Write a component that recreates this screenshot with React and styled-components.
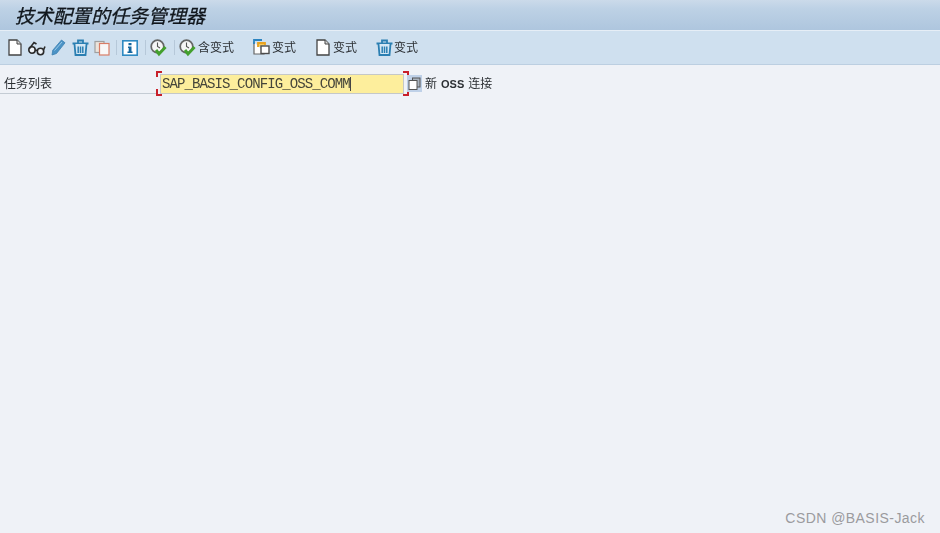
import React from 'react';
import styled, { createGlobalStyle } from 'styled-components';

const Global = createGlobalStyle`
  html, body { margin: 0; padding: 0; background: #eff2f7; }
  #root { width: 940px; height: 533px; overflow: hidden; }
`;
const CJK = `"Liberation Sans", "Noto Sans CJK SC", sans-serif`;

const Page = styled.div`
  width: 940px; height: 533px; background: #eff2f7;
  display: flex; flex-direction: column; position: relative; overflow: hidden;
  font-family: ${CJK}; color: #222;
`;
const TitleBar = styled.header`
  height: 31px; flex: none; box-sizing: border-box; padding: 0 0 0 15px;
  display: flex; align-items: center;
  background: linear-gradient(#cbdaea 0, #bdd1e5 30%, #aec6de 100%);
  border-bottom: 1px solid #e6eef6;
`;
const Title = styled.h1`
  margin: 0; font-size: 19px; line-height: 28px; font-weight: 400; font-style: italic; color: #10161c;
  -webkit-text-stroke: 0.3px #10161c; filter: blur(.3px);
  font-family: "Noto Sans CJK SC", sans-serif;
`;
const Toolbar = styled.nav`
  height: 34px; flex: none; box-sizing: border-box; padding: 0 0 0 8px;
  display: flex; align-items: center;
  background: #cfe0ef; border-bottom: 1px solid #bccfe1;
`;
const Tool = styled.button`
  all: unset; display: flex; align-items: center; gap: ${p => p.$gap || 2}px;
  height: 20px; margin-left: ${p => p.$ml || 0}px; filter: blur(.35px);
  font: 12px/20px ${CJK}; color: #2c3034;
`;
const Sep = styled.span`
  width: 1px; height: 15px; background: #b6c8d9; margin-left: ${p => p.$ml}px;
`;
const Row = styled.section`
  display: flex; align-items: flex-start; height: 32px; padding-top: 6px;
`;
const Label = styled.label`
  width: 156px; height: 23px; box-sizing: border-box; padding: 5px 0 0 4px;
  font-size: 12px; line-height: 16px; color: #2b2f33; border-bottom: 1px solid #c4ccd4; flex: none;
  filter: blur(.3px);
`;
const Required = styled.div`
  position: relative; width: 253px; height: 25px; flex: none;
  display: flex; align-items: center; padding: 0 0 0 4px; box-sizing: border-box;
`;
const Corner = styled.i`
  position: absolute; width: 6px; height: 6px; box-sizing: border-box;
  border: 0 solid #c8202a;
  ${p => (p.$right ? 'right: 0; border-right-width: 2px;' : 'left: 0; border-left-width: 2px;')}
  ${p => (p.$bottom ? 'bottom: 0; height: 7px; border-bottom-width: 2px;' : 'top: 0; border-top-width: 2px;')}
`;
const Field = styled.div`
  width: 244px; height: 20px; box-sizing: border-box; background: #fdee9c;
  border: 1px solid #c5c8c8; padding-left: 1px;
  font: 14px/18px "Liberation Mono", monospace; letter-spacing: -0.89px; color: #45453a;
  white-space: nowrap; display: flex; align-items: center;
  span:first-child { filter: blur(.3px); }
`;
const Caret = styled.span`
  width: 1px; height: 14px; background: #444;
`;
const HelpButton = styled.button`
  all: unset; width: 15px; height: 17px; margin: 4px 0 0 -2px; flex: none; position: relative;
  background: #bfd1e8; display: flex; align-items: center; justify-content: center;
`;
const Description = styled.span`
  margin: 5px 0 0 3px; font-size: 12px; line-height: 16px; color: #2b2f33; filter: blur(.3px);
  b { font-weight: 700; font-size: 11px; margin: 0 4px; }
`;
const Watermark = styled.div`
  position: absolute; right: 15px; bottom: 7px; font: 14px "Liberation Sans", sans-serif;
  letter-spacing: 0.45px; color: #9b9b9e;
`;

const Doc = () => (
  <svg width="14" height="17" viewBox="0 0 14 17">
    <path d="M1 1h8l4 4v11H1z" fill="#fff" stroke="#444" strokeWidth="1.300" />
    <path d="M9 1v4h4" fill="#d8d8d8" stroke="#444" />
  </svg>
);
const Glasses = () => (
  <svg width="18" height="16" viewBox="0 0 18 16" fill="none" stroke="#2a2a2a" strokeWidth="1.600">
    <circle cx="4" cy="10" r="3.200" fill="#eef3f8" />
    <circle cx="12.500" cy="11.500" r="3.200" fill="#eef3f8" />
    <path d="M7 10l2.500.5M1.500 8.500L6 2.500l2.500 1.500M15.500 10L17 6.500" />
  </svg>
);
const Pencil = () => (
  <svg width="15" height="17" viewBox="0 0 15 17">
    <path d="M10.500 1L14 3.800 5.500 14.500 1 16l.8-4.800z" fill="#4b93c6" stroke="#3c80b0" strokeWidth=".8" />
    <path d="M3.500 11.500l7.500-8.500" stroke="#9ccbe8" />
  </svg>
);
const Trash = () => (
  <svg width="17" height="17" viewBox="0 0 17 17" fill="none" stroke="#2b7fb2" strokeWidth="1.800">
    <path d="M.5 4.500h16M6 4V1.500h5V4" />
    <path d="M2.500 5l1 11h10l1-11" fill="#d4e7f4" />
    <path d="M6.200 7.500v6.500M8.500 7.500v6.500M10.800 7.500v6.500" strokeWidth="1.500" />
  </svg>
);
const CopyDoc = () => (
  <svg width="16" height="16" viewBox="0 0 16 16">
    <rect x="1" y="1.500" width="9" height="11" fill="#ece4dc" stroke="#a0a0a0" strokeWidth="1.200" />
    <rect x="5.500" y="3.500" width="9.500" height="11.500" fill="#f8f8f8" stroke="#d97d66" strokeWidth="1.200" />
  </svg>
);
const Info = () => (
  <svg width="16" height="16" viewBox="0 0 16 16">
    <rect x=".8" y=".8" width="14.400" height="14.400" fill="#fff" stroke="#2f8ac2" strokeWidth="1.600" />
    <path d="M6.500 3h3v2.200h-3zM6 6.500h3.500v5h1V13h-5v-1.500h1.200V8H6z" fill="#16679e" />
  </svg>
);
const Clock = () => (
  <svg width="17" height="18" viewBox="0 0 17 18" fill="none">
    <circle cx="7.500" cy="7.500" r="6.300" fill="#f6f6f6" stroke="#666" strokeWidth="1.700" />
    <path d="M7.500 3.500v4l2.500 1.500" stroke="#555" strokeWidth="1.100" />
    <path d="M6 11l3 4 6.500-7" stroke="#43a02e" strokeWidth="3" />
  </svg>
);
const Copies = () => (
  <svg width="17" height="17" viewBox="0 0 17 17" fill="none">
    <path d="M1 3v12h10V13" stroke="#666" fill="#fff" strokeWidth="1.200" />
    <path d="M1 5V1h8" stroke="#2c84c0" strokeWidth="1.800" />
    <path d="M5 8V4h7v2" fill="#f6c95a" stroke="#e9a21e" strokeWidth="1.800" />
    <rect x="8" y="7" width="8" height="7.500" fill="#fff" stroke="#4c4c4c" strokeWidth="1.400" />
  </svg>
);
const Windows = () => (
  <svg width="13" height="14" viewBox="0 0 13 14" fill="none">
    <rect x="4.500" y="1" width="7.500" height="9" fill="#aab4c0" stroke="#555" />
    <rect x="1" y="3.500" width="8" height="9" fill="#fff" stroke="#555" />
  </svg>
);

export default function App() {
  return (
    <Page>
      <Global />
      <TitleBar><Title>技术配置的任务管理器</Title></TitleBar>
      <Toolbar>
        <Tool><Doc /></Tool>
        <Tool $ml={6}><Glasses /></Tool>
        <Tool $ml={5}><Pencil /></Tool>
        <Tool $ml={6}><Trash /></Tool>
        <Tool $ml={5}><CopyDoc /></Tool>
        <Sep $ml={6} />
        <Tool $ml={5}><Info /></Tool>
        <Sep $ml={7} />
        <Tool $ml={4}><Clock /></Tool>
        <Sep $ml={7} />
        <Tool $ml={4}><Clock />含变式</Tool>
        <Tool $ml={19}><Copies />变式</Tool>
        <Tool $ml={20} $gap={3}><Doc />变式</Tool>
        <Tool $ml={19} $gap={1}><Trash />变式</Tool>
      </Toolbar>
      <Row>
        <Label>任务列表</Label>
        <Required>
          <Corner /><Corner $bottom />
          <Field><span>SAP_BASIS_CONFIG_OSS_COMM</span><Caret /></Field>
          <Corner $right /><Corner $right $bottom />
        </Required>
        <HelpButton aria-label="help"><Windows /></HelpButton>
        <Description>新<b>OSS</b>连接</Description>
      </Row>
      <Watermark>CSDN @BASIS-Jack</Watermark>
    </Page>
  );
}
